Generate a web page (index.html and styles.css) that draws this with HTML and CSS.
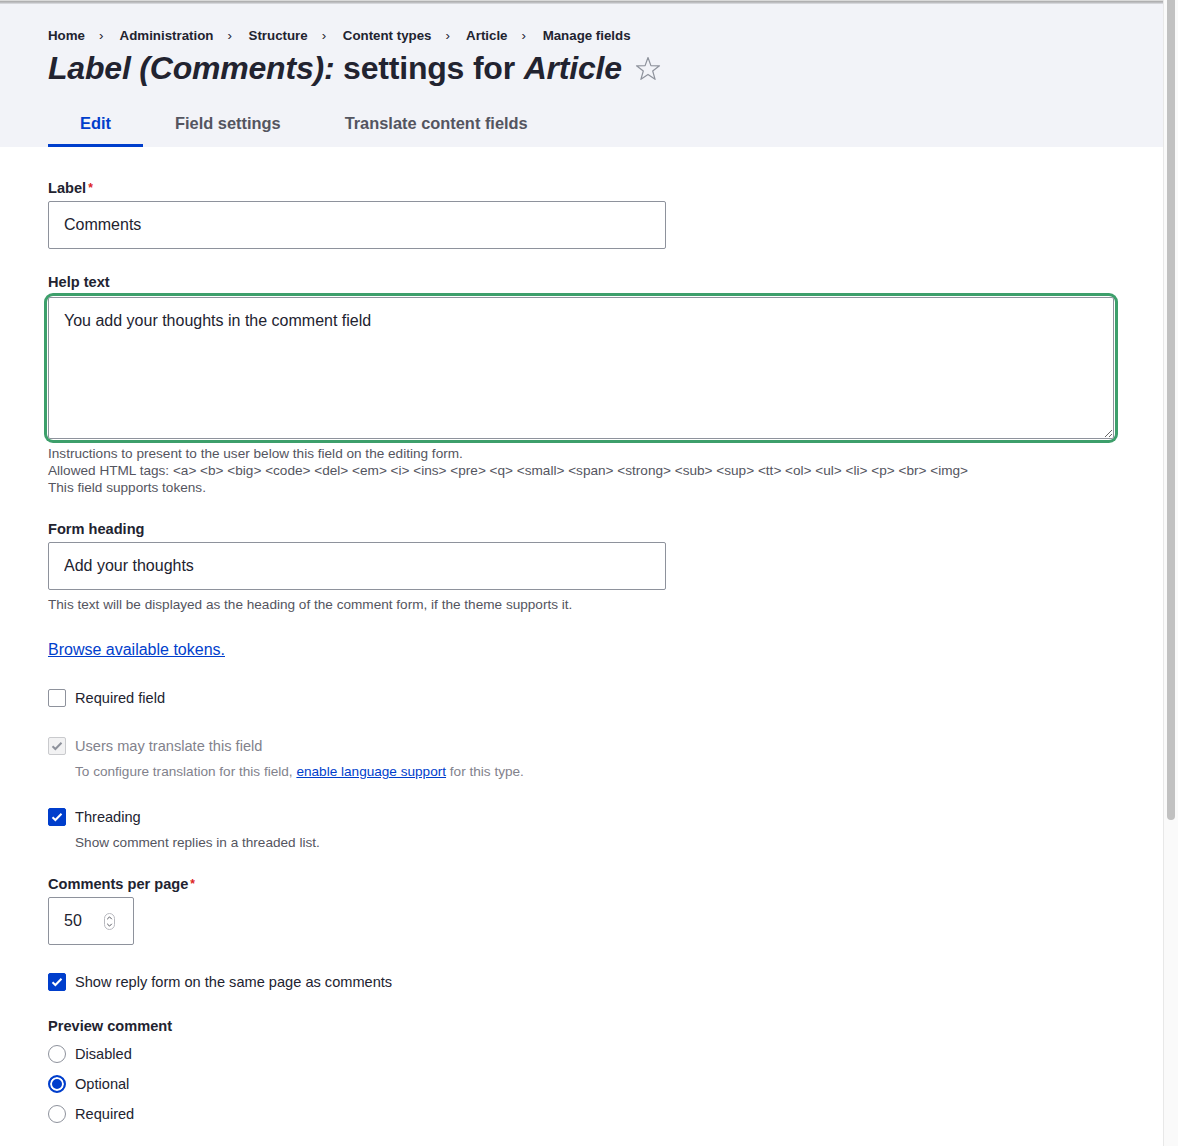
FILE: index.html
```html
<!DOCTYPE html>
<html lang="en">
<head>
  <meta charset="UTF-8" />
  <title>Label (Comments): settings for Article</title>
  <link rel="stylesheet" href="styles.css">
</head>
<body>
  <div class="window">
    <div class="page">
      <div class="top-edge"></div>

      <header class="page-header">
        <nav class="breadcrumb">
          <a href="#">Home</a><span class="sep">›</span>
          <a href="#">Administration</a><span class="sep">›</span>
          <a href="#">Structure</a><span class="sep">›</span>
          <a href="#">Content types</a><span class="sep">›</span>
          <a href="#">Article</a><span class="sep">›</span>
          <a href="#">Manage fields</a>
        </nav>
        <h1 class="page-title">
          <em>Label (Comments):</em> settings for <em>Article</em>
          <svg class="star" width="26" height="26" viewBox="0 0 26 26">
            <polygon points="13,1.5 15.9,9.6 24.5,9.8 17.7,15 20.1,23.3 13,18.4 5.9,23.3 8.3,15 1.5,9.8 10.1,9.6" fill="none" stroke="#8e929c" stroke-width="1.2" stroke-linejoin="round"/>
          </svg>
        </h1>
        <ul class="tabs">
          <li class="tab active"><a href="#">Edit</a></li>
          <li class="tab"><a href="#">Field settings</a></li>
          <li class="tab"><a href="#">Translate content fields</a></li>
        </ul>
      </header>

      <form class="content">
        <div class="form-item">
          <label class="form-label">Label<span class="req">*</span></label>
          <input class="text-input" type="text" value="Comments">
        </div>

        <div class="form-item">
          <label class="form-label">Help text</label>
          <div class="focus-ring">
            <textarea class="text-area">You add your thoughts in the comment field</textarea>
          </div>
          <div class="description">
            Instructions to present to the user below this field on the editing form.<br>
            Allowed HTML tags: &lt;a&gt; &lt;b&gt; &lt;big&gt; &lt;code&gt; &lt;del&gt; &lt;em&gt; &lt;i&gt; &lt;ins&gt; &lt;pre&gt; &lt;q&gt; &lt;small&gt; &lt;span&gt; &lt;strong&gt; &lt;sub&gt; &lt;sup&gt; &lt;tt&gt; &lt;ol&gt; &lt;ul&gt; &lt;li&gt; &lt;p&gt; &lt;br&gt; &lt;img&gt;<br>
            This field supports tokens.
          </div>
        </div>

        <div class="form-item spaced">
          <label class="form-label">Form heading</label>
          <input class="text-input" type="text" value="Add your thoughts">
          <div class="description">This text will be displayed as the heading of the comment form, if the theme supports it.</div>
        </div>

        <div class="form-item">
          <a class="token-link" href="#">Browse available tokens.</a>
        </div>

        <div class="form-item">
          <div class="check-row">
            <span class="checkbox"></span>
            <span class="check-label">Required field</span>
          </div>
        </div>

        <div class="form-item spaced disabled">
          <div class="check-row">
            <span class="checkbox checked-disabled">
              <svg width="12" height="10" viewBox="0 0 12 10"><path d="M1.5 5.2 4.4 8 10.5 1.8" fill="none" stroke="#8e929c" stroke-width="2"/></svg>
            </span>
            <span class="check-label">Users may translate this field</span>
          </div>
          <div class="description indented">To configure translation for this field, <a href="#">enable language support</a> for this type.</div>
        </div>

        <div class="form-item">
          <div class="check-row">
            <span class="checkbox checked">
              <svg width="12" height="10" viewBox="0 0 12 10"><path d="M1.5 5.2 4.4 8 10.5 1.8" fill="none" stroke="#fff" stroke-width="2"/></svg>
            </span>
            <span class="check-label">Threading</span>
          </div>
          <div class="description indented">Show comment replies in a threaded list.</div>
        </div>

        <div class="form-item spaced">
          <label class="form-label">Comments per page<span class="req">*</span></label>
          <div class="number-input">
            <span>50</span>
            <svg class="spinner" width="11" height="17" viewBox="0 0 11 17">
              <rect x="0.5" y="0.5" width="10" height="16" rx="5" fill="#fff" stroke="#b8b9bf"/>
              <path d="M3.2 6.2 5.5 3.9 7.8 6.2M3.2 10.8 5.5 13.1 7.8 10.8" fill="none" stroke="#55565f" stroke-width="1"/>
            </svg>
          </div>
        </div>

        <div class="form-item tight">
          <div class="check-row">
            <span class="checkbox checked">
              <svg width="12" height="10" viewBox="0 0 12 10"><path d="M1.5 5.2 4.4 8 10.5 1.8" fill="none" stroke="#fff" stroke-width="2"/></svg>
            </span>
            <span class="check-label">Show reply form on the same page as comments</span>
          </div>
        </div>

        <div class="form-item">
          <label class="form-label">Preview comment</label>
          <div class="radios">
            <div class="check-row"><span class="radio"></span><span class="check-label">Disabled</span></div>
            <div class="check-row"><span class="radio selected"></span><span class="check-label">Optional</span></div>
            <div class="check-row"><span class="radio"></span><span class="check-label">Required</span></div>
          </div>
        </div>
      </form>
    </div>

    <div class="scrollbar">
      <div class="thumb"></div>
    </div>
  </div>
</body>
</html>
```

FILE: styles.css
```css
html, body {
  margin: 0;
  padding: 0;
  background: #fff;
}
body {
  font-family: "Liberation Sans", Arial, sans-serif;
  color: #222330;
}
.window {
  display: flex;
  height: 1146px;
  overflow: hidden;
}
.page {
  flex: 1;
  min-width: 0;
}
.top-edge {
  height: 4px;
  background: linear-gradient(#d9d9d9 0, #d9d9d9 1px, #a9a9a9 1px, #c4c5c9 3px, #e6e7ec 4px);
}

/* header */
.page-header {
  background: #f2f3f8;
  padding: 22px 48px 0;
}
.breadcrumb {
  font-size: 13.3px;
  font-weight: bold;
  line-height: 20px;
}
.breadcrumb a {
  color: #222330;
  text-decoration: none;
}
.breadcrumb .sep {
  font-weight: normal;
  margin: 0 13px 0 14px;
  color: #222330;
}
.page-title {
  margin: 2px 0 0;
  font-size: 32px;
  line-height: 40px;
  font-weight: bold;
  letter-spacing: -0.2px;
  display: flex;
  align-items: center;
  white-space: pre;
}
.page-title em {
  font-style: italic;
}
.star {
  margin-left: 13px;
  margin-top: 1px;
}
.tabs {
  list-style: none;
  margin: 14px 0 0;
  padding: 0;
  display: flex;
}
.tab a {
  display: block;
  padding: 0 32px;
  height: 45px;
  line-height: 42px;
  font-size: 16.4px;
  font-weight: bold;
  color: #545560;
  text-decoration: none;
  border-bottom: 3px solid transparent;
  box-sizing: border-box;
}
.tab.active a {
  color: #003ecc;
  border-bottom-color: #003ecc;
}

/* form */
.content {
  padding: 32px 49px 0 48px;
}
.form-item {
  margin-bottom: 24px;
}
.form-item.spaced {
  margin-bottom: 25px;
}
.form-item.tight {
  margin-bottom: 23px;
}
.form-label {
  display: block;
  font-size: 14.6px;
  font-weight: bold;
  line-height: 18px;
  margin-bottom: 4px;
}
.req {
  color: #dc2323;
  margin-left: 2px;
  font-size: 12px;
  vertical-align: top;
}
.text-input {
  display: block;
  box-sizing: border-box;
  width: 618px;
  height: 48px;
  padding: 0 15px;
  border: 1px solid #8e929c;
  border-radius: 2px;
  font-family: "Liberation Sans", Arial, sans-serif;
  font-size: 16px;
  color: #222330;
  background: #fff;
  outline: none;
}
.focus-ring {
  border-radius: 5px;
  box-shadow: 0 0 0 1px #fff, 0 0 0 4px #3d9f6b;
  margin-top: 6px;
}
.text-area {
  display: block;
  box-sizing: border-box;
  width: 100%;
  height: 142px;
  padding: 11px 15px;
  border: 1px solid #8e929c;
  border-radius: 2px;
  font-family: "Liberation Sans", Arial, sans-serif;
  font-size: 16px;
  line-height: 24px;
  color: #222330;
  outline: none;
  resize: vertical;
}
.description {
  margin-top: 6px;
  font-size: 13.6px;
  line-height: 17px;
  color: #545560;
}
.description.indented {
  margin-left: 27px;
  margin-top: 5px;
}
.description a {
  color: #003ecc;
}
.token-link {
  display: block;
  font-size: 16px;
  line-height: 24px;
  color: #003ecc;
  text-decoration: underline;
}

/* checkboxes and radios */
.check-row {
  display: flex;
  align-items: center;
  gap: 9px;
  height: 24px;
}
.check-label {
  font-size: 14.6px;
  color: #222330;
}
.checkbox {
  box-sizing: border-box;
  width: 18px;
  height: 18px;
  border: 1px solid #8e929c;
  border-radius: 2px;
  background: #fff;
  display: flex;
  align-items: center;
  justify-content: center;
}
.checkbox.checked {
  background: #003ecc;
  border-color: #003ecc;
}
.checkbox.checked-disabled {
  background: #f2f2f3;
  border-color: #c9cacd;
}
.disabled .check-label {
  color: #82828c;
}
.disabled .description {
  color: #82828c;
}
.radios {
  display: flex;
  flex-direction: column;
  gap: 6px;
  margin-top: 7px;
}
.radios .check-row + .check-row + .check-row {
  margin-top: 0;
}
.radio {
  box-sizing: border-box;
  width: 18px;
  height: 18px;
  border: 1px solid #8e929c;
  border-radius: 50%;
  background: #fff;
}
.radio.selected {
  border: 2px solid #003ecc;
  box-shadow: inset 0 0 0 2px #fff;
  background: #003ecc;
}

.number-input {
  box-sizing: border-box;
  width: 86px;
  height: 48px;
  border: 1px solid #8e929c;
  border-radius: 2px;
  display: flex;
  align-items: center;
  padding-left: 15px;
  font-size: 16px;
}
.number-input .spinner {
  margin-left: 22px;
}

/* fake window scrollbar */
.scrollbar {
  width: 15px;
  flex: none;
  background: #fafafa;
  border-left: 1px solid #e8e8e8;
  box-sizing: border-box;
  padding-left: 3px;
}
.thumb {
  width: 8px;
  height: 820px;
  background: #c1c1c1;
  border-radius: 0 0 4px 4px;
}
```
